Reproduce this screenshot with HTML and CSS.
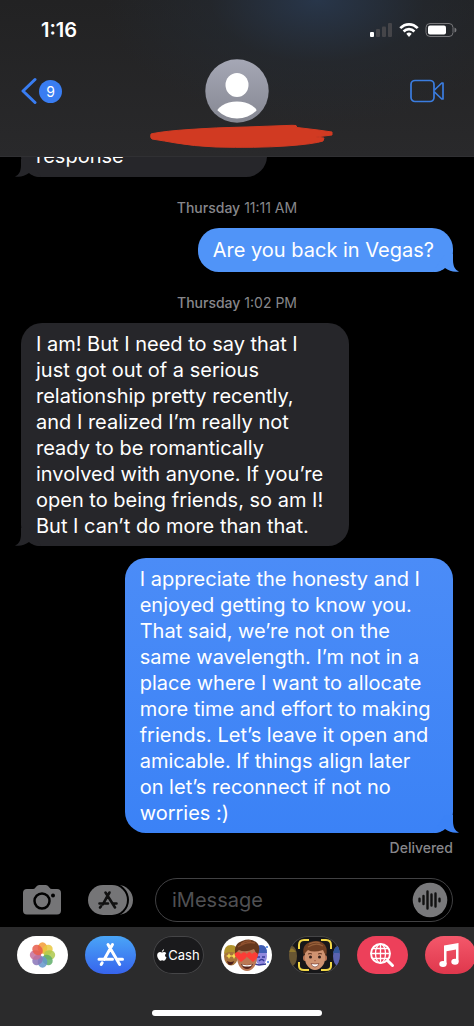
FILE: index.html
```html
<!DOCTYPE html>
<html lang="en">
<head>
    <meta charset="UTF-8">
    <meta name="viewport" content="width=device-width, initial-scale=1.0">
    <title>Messages</title>
    <link rel="stylesheet" href="styles.css">
</head>
<body>
    <!-- Header Section -->
    <header class="header">
        <div class="status-bar">
            <time class="clock">1:16</time>
            <div class="status-icons">
                <svg class="icon-signal" viewBox="0 0 24 16" width="24" height="16">
                    <rect x="1" y="10" width="4" height="5" rx="1" fill="#fff"/>
                    <rect x="7" y="7" width="4" height="8" rx="1" fill="#454549"/>
                    <rect x="13" y="4.500" width="4" height="10.500" rx="1" fill="#454549"/>
                    <rect x="19" y="1" width="4" height="14" rx="1" fill="#454549"/>
                </svg>
                <svg class="icon-wifi" viewBox="0 0 20 16" width="20" height="16" fill="none" stroke="#fff" stroke-width="2.700">
                    <path d="M1.300 6.100C6.300 1 13.700 1 18.700 6.100"/>
                    <path d="M4.600 9.500C7.700 6.400 12.300 6.400 15.400 9.500"/>
                    <path d="M7.300 11.700Q10 9.400 12.700 11.700L10 14.900Z" fill="#fff" stroke="none"/>
                </svg>
                <svg class="icon-battery" viewBox="0 0 32 16" width="32" height="16">
                    <rect x="1" y="1.500" width="27" height="13" rx="4" fill="none" stroke="#77777a"/>
                    <rect x="3" y="3.500" width="18" height="9" rx="2" fill="#fff"/>
                    <path d="M29.500 5.500q2 .5 2 2.500t-2 2.500z" fill="#77777a"/>
                </svg>
            </div>
        </div>

        <nav class="nav-bar">
            <button class="back-button" type="button" aria-label="Back, 9 unread">
                <svg viewBox="0 0 16 28" width="16" height="28" fill="none" stroke="#397df2" stroke-width="3" stroke-linecap="round" stroke-linejoin="round">
                    <path d="M14 2.500L2 14l12 11.500"/>
                </svg>
                <span class="badge">9</span>
            </button>
            <button class="avatar" type="button" aria-label="Contact">
                <svg viewBox="0 0 64 64" width="64" height="64">
                    <defs>
                        <linearGradient id="avatar-fill" x1="0" y1="0" x2="0" y2="1">
                            <stop offset="0" stop-color="#a5a7b5"/>
                            <stop offset="1" stop-color="#858792"/>
                        </linearGradient>
                        <clipPath id="avatar-clip"><circle cx="32" cy="32" r="27.500"/></clipPath>
                    </defs>
                    <circle cx="32" cy="32" r="31.700" fill="url(#avatar-fill)"/>
                    <ellipse cx="32" cy="26" rx="11.500" ry="12" fill="#fff"/>
                    <ellipse cx="32" cy="56" rx="21" ry="13.500" fill="#fff" clip-path="url(#avatar-clip)"/>
                </svg>
            </button>
            <button class="video-button" type="button" aria-label="FaceTime">
                <svg viewBox="0 0 36 24" width="36" height="24" fill="none" stroke="#3b7de0" stroke-width="1.700" stroke-linejoin="round">
                    <rect x="2" y="1.500" width="23" height="21" rx="4"/>
                    <path d="M25.500 11L32.800 4H34V20H32.800L25.500 13"/>
                </svg>
            </button>
        </nav>

        <svg class="marker" viewBox="0 0 192 24" width="192" height="24">
            <path d="M10 10Q9 14 11 15Q24 17 35 19Q52 22 75 23Q115 24 145 22Q173 20 182 17L183 14L175 13L191 11V8L177 6L156 3.500L155 1.500L151 1.300L105 3Q75 3.500 48 5.500Q25 7 12 9.500Z" fill="#d13a22" stroke="#d13a22" stroke-linejoin="round"/>
        </svg>
    </header>

    <!-- Conversation -->
    <main class="conversation">
        <div class="bubble received clipped">response
            <svg class="tail" viewBox="0 0 26 18" width="26" height="18"><path d="M6 0V6C6 12 4 16 0 17.500C5 18.500 10 17 14 14C17 16.500 20 18 26 18L14 0Z"/></svg>
        </div>

        <p class="timestamp"><strong>Thursday</strong> 11:11 AM</p>
        <div class="bubble sent light">Are you back in Vegas?
            <svg class="tail" viewBox="0 0 26 18" width="26" height="18"><path d="M20 0V6C20 12 22 16 26 17.500C21 18.500 16 17 12 14C9 16.500 6 18 0 18L12 0Z"/></svg>
        </div>

        <p class="timestamp"><strong>Thursday</strong> 1:02 PM</p>
        <div class="bubble received">I am! But I need to say that I just got out of a serious relationship pretty recently, and I realized I’m really not ready to be romantically involved with anyone. If you’re open to being friends, so am I! But I can’t do more than that.
            <svg class="tail" viewBox="0 0 26 18" width="26" height="18"><path d="M6 0V6C6 12 4 16 0 17.500C5 18.500 10 17 14 14C17 16.500 20 18 26 18L14 0Z"/></svg>
        </div>
        <div class="bubble sent">I appreciate the honesty and I enjoyed getting to know you. That said, we’re not on the same wavelength. I’m not in a place where I want to allocate more time and effort to making friends. Let’s leave it open and amicable. If things align later on let’s reconnect if not no worries :)
            <svg class="tail" viewBox="0 0 26 18" width="26" height="18"><path d="M20 0V6C20 12 22 16 26 17.500C21 18.500 16 17 12 14C9 16.500 6 18 0 18L12 0Z"/></svg>
        </div>
        <p class="delivered">Delivered</p>
    </main>

    <!-- Message Form -->
    <form class="composer">
        <button class="tool" type="button" aria-label="Camera">
            <svg viewBox="0 0 42 32" width="42" height="32">
                <path d="M6 5h6q1.500 0 2.500-1.500Q16 1 18 1h7q2 0 3.300 2.500Q29.300 5 31 5h5q4 0 4 4v17.500q0 4-4 4H6q-4 0-4-4V9q0-4 4-4z" fill="#757577"/>
                <circle cx="21" cy="17" r="7.500" fill="none" stroke="#000" stroke-width="2.500"/>
                <circle cx="32" cy="11.500" r="2" fill="#000"/>
            </svg>
        </button>
        <button class="tool" type="button" aria-label="Apps">
            <svg viewBox="0 0 48 32" width="48" height="32">
                <rect x="12" y="1" width="36" height="30" rx="15" fill="#757577"/>
                <rect x="1" y="-1" width="43" height="34" rx="17" fill="#000"/>
                <rect x="3" y="1" width="39" height="30" rx="15" fill="#757577"/>
                <g fill="none" stroke="#111" stroke-width="2.600" stroke-linecap="round">
                    <path d="M24.500 8.500l-6.700 11.800M16 22.300l-1 1.200M20.500 8.500l9.500 15M14.500 19.500H23M28.500 19.500h3"/>
                </g>
            </svg>
        </button>
        <div class="field">
            <input class="field-input" type="text" placeholder="iMessage" aria-label="iMessage">
            <button class="audio-button" type="button" aria-label="Record audio">
                <svg viewBox="0 0 36 36" width="36" height="36">
                    <circle cx="18" cy="18" r="17.300" fill="#79797b"/>
                    <path d="M7.500 16.800v2.400M11.500 14v8M15.500 9.500v17M19.500 12.500v11M23.500 11.500v13M27.500 16.800v2.400" fill="none" stroke="#111" stroke-width="2.400" stroke-linecap="round"/>
                </svg>
            </button>
        </div>
    </form>

    <!-- App Drawer -->
    <footer class="drawer">
        <div class="app-list">
            <button class="app photos" type="button" aria-label="Photos">
                <svg viewBox="0 0 51 38" width="51" height="38">
                    <g fill-opacity=".85">
                        <ellipse cx="25.500" cy="12" rx="4.800" ry="5.700" fill="#f39b35"/>
                        <ellipse cx="25.500" cy="12" rx="4.800" ry="5.700" fill="#e9c83f" transform="rotate(45 25.500 19)"/>
                        <ellipse cx="25.500" cy="12" rx="4.800" ry="5.700" fill="#aec94d" transform="rotate(90 25.500 19)"/>
                        <ellipse cx="25.500" cy="12" rx="4.800" ry="5.700" fill="#5fae69" transform="rotate(135 25.500 19)"/>
                        <ellipse cx="25.500" cy="12" rx="4.800" ry="5.700" fill="#6496cd" transform="rotate(180 25.500 19)"/>
                        <ellipse cx="25.500" cy="12" rx="4.800" ry="5.700" fill="#8975b8" transform="rotate(225 25.500 19)"/>
                        <ellipse cx="25.500" cy="12" rx="4.800" ry="5.700" fill="#c46f9b" transform="rotate(270 25.500 19)"/>
                        <ellipse cx="25.500" cy="12" rx="4.800" ry="5.700" fill="#e85d4b" transform="rotate(315 25.500 19)"/>
                    </g>
                    <circle cx="25.500" cy="19" r="1" fill="#fff"/>
                </svg>
            </button>
            <button class="app store" type="button" aria-label="App Store">
                <svg viewBox="0 0 51 38" width="51" height="38">
                    <path d="M27.500 8.500l-8.300 15M17.200 26.700l-1 1.700M23 8.500l11.700 20M14 23.300h13.500M33 23.300h4.500" fill="none" stroke="#fff" stroke-width="3" stroke-linecap="round"/>
                </svg>
            </button>
            <button class="app cash" type="button">
                <svg viewBox="0 0 10 12" width="10" height="12" fill="#fff">
                    <path d="M7 0Q7.200 2.200 4.900 3Q4.700 1 7 0zM5 3.600Q7.800 2.300 9.300 4.200Q7.500 5.500 8.300 7.300Q8.700 8.200 9.600 8.600Q8.200 12 6.800 11.700Q5 11 3.700 11.700Q2.300 12.200.8 9Q-.7 5.500 1.200 3.800Q2.700 2.500 5 3.600z"/>
                </svg>
                <span>Cash</span>
            </button>
            <button class="app stickers" type="button" aria-label="Memoji Stickers">
                <svg viewBox="0 0 51 38" width="51" height="38">
                    <!-- face with star eyes -->
                    <ellipse cx="10" cy="20" rx="7" ry="9.500" fill="#a6733c"/>
                    <path d="M3 18Q3 9 10 9Q17 9 17 18Q10 14 3 18z" fill="#b2942d"/>
                    <path d="M5 20l2-1 1-2 1 2 2 1-2 1-1 2-1-2zM10 20l2-1 1-2 1 2 2 1-2 1-1 2-1-2z" fill="#f7dc52"/>
                    <path d="M6 25q4 2 7 0q-1 4-4 4q-2 0-3-4z" fill="#4e201b"/>
                    <!-- face with blue hat -->
                    <ellipse cx="40" cy="20" rx="6" ry="9" fill="#9188dd"/>
                    <path d="M33 17Q34 9 40 9Q46 9 46 17z" fill="#3f5db4"/>
                    <path d="M36 21h3M41 21h3M38 25q3-3 5 0M34 28l4 1 7-1" stroke="#363a97" stroke-width="1.500" fill="none"/>
                    <circle cx="46" cy="11" r="1" fill="#4279dc"/>
                    <circle cx="47" cy="26" r="1" fill="#4279dc"/>
                    <!-- face with heart eyes -->
                    <ellipse cx="26" cy="21" rx="10" ry="14" fill="#b97855"/>
                    <path d="M15 21Q11 8 21 5Q31 1 37 8Q40 13 36 21Q35 16 33 13Q24 17 18 14Q15 16 15 21z" fill="#65381e"/>
                    <path d="M17 11Q26 5 34 7M20 8Q25 4 30 5" fill="none" stroke="#8d502e" stroke-width="1.500"/>
                    <path d="M20 26l-6-6q-1-4 3-4q2 0 3 2q2-3 5-1q2 2 0 5zM32 26l-6-5q-1-4 2-5q2 0 3 2q2-3 5-1q2 2 0 5z" fill="#fb3d36"/>
                    <path d="M20 28Q26 30 32 28Q30 33 26 33Q22 33 20 28z" fill="#552119"/>
                    <path d="M21 28.500Q26 30 31 28.500L30 30Q26 31 22 30z" fill="#fff"/>
                </svg>
            </button>
            <button class="app memoji" type="button" aria-label="Memoji">
                <svg viewBox="0 0 51 38" width="51" height="38">
                    <ellipse cx="3" cy="20" rx="5" ry="10" fill="#685632"/>
                    <path d="M0 16Q2 9 7 16z" fill="#91792e"/>
                    <ellipse cx="49" cy="20" rx="5" ry="10" fill="#5b63b1"/>
                    <path d="M44 17q2-8 7-6v6z" fill="#33569b"/>
                    <ellipse cx="16" cy="22" rx="2" ry="3" fill="#b97555"/>
                    <ellipse cx="36" cy="22" rx="2" ry="3" fill="#b97555"/>
                    <path d="M16 18Q16 10 26 10Q36 10 36 18V24Q35 30 30 33Q26 35 22 33Q17 30 16 24z" fill="#cf9371"/>
                    <path d="M15 20Q12 9 21 6Q31 3 36 9Q39 14 37 20L34 14Q24 17 19 14Q16 16 15 20z" fill="#6f3e22"/>
                    <path d="M19 11Q27 6 34 10M20 8Q26 5 31 7" fill="none" stroke="#97603a" stroke-width="1.200"/>
                    <path d="M19 18q2-1 4 0M29 18q2-1 4 0" stroke="#673a25" fill="none"/>
                    <circle cx="21.500" cy="21" r="1.500" fill="#36211c"/>
                    <circle cx="30.500" cy="21" r="1.500" fill="#36211c"/>
                    <path d="M25 24.500q1 .7 2 0" stroke="#a9664b" fill="none"/>
                    <path d="M22 27.500Q26 28.500 30 27.500Q29 31 26 31Q23 31 22 27.500z" fill="#fff" stroke="#7d4033" stroke-width=".7"/>
                    <path d="M10 13V9q0-5 5-5h5M32 4h5q5 0 5 5v4M10 26v4q0 4 5 4h5M32 34h5q5 0 5-4v-4" fill="none" stroke="#f2d847" stroke-width="2"/>
                </svg>
            </button>
            <button class="app images" type="button" aria-label="Images">
                <svg viewBox="0 0 51 38" width="51" height="38" fill="none" stroke="#fff">
                    <circle cx="23.500" cy="17.500" r="9.500" stroke-width="1.900"/>
                    <path d="M23.500 8v19M14 17.500h19M16 12.500h15M16 22.500h15" stroke-width="1.300"/>
                    <ellipse cx="23.500" cy="17.500" rx="5" ry="9.500" stroke-width="1.300"/>
                    <path d="M30.500 24.500l5 5" stroke-width="3" stroke-linecap="round"/>
                </svg>
            </button>
            <button class="app music" type="button" aria-label="Music">
                <svg viewBox="0 0 51 38" width="51" height="38" fill="#fff">
                    <path d="M19 9.500L33.500 7V25.500H31V13.500L21.500 15.300V28H19z"/>
                    <ellipse cx="18" cy="28" rx="3.700" ry="3"/>
                    <ellipse cx="30" cy="25.800" rx="3.700" ry="3"/>
                </svg>
            </button>
        </div>
        <div class="home-indicator"></div>
    </footer>
</body>
</html>
```
FILE: styles.css
```css
/* Global Styles */
* {
    box-sizing: border-box;
}

body {
    font-family: Inter, "Liberation Sans", sans-serif;
    margin: 0;
    height: 100vh;
    display: flex;
    flex-direction: column;
    overflow: hidden;
    background: #000;
    color: #fff;
}

button {
    font-family: inherit;
    margin: 0;
    padding: 0;
    border: none;
    background: none;
    color: inherit;
    cursor: pointer;
}

svg {
    display: block;
    flex-shrink: 0;
}

/* Header Section */
.header {
    flex-shrink: 0;
    padding-bottom: 8px;
    background:
        radial-gradient(ellipse 45% 80% at 67% 0, #28364a 0%, rgba(36, 43, 52, 0.5) 50%, rgba(36, 36, 38, 0) 100%),
        linear-gradient(#222223, #29292b);
    border-bottom: 1px solid #303033;
}

.status-bar {
    display: flex;
    justify-content: space-between;
    align-items: center;
    height: 59px;
    padding: 0 17px 0 41px;
}

.clock {
    font-size: 20px;
    font-weight: 600;
}

.status-icons {
    display: flex;
    gap: 6px;
}

.nav-bar {
    display: grid;
    grid-template-columns: 1fr auto 1fr;
    align-items: center;
    padding: 0 21px;
}

.back-button {
    display: flex;
    align-items: center;
    gap: 2px;
    justify-self: start;
}

.badge {
    width: 23px;
    height: 23px;
    border-radius: 50%;
    background: #397df2;
    font-size: 14px;
    line-height: 23px;
    text-align: center;
}

.avatar {
    border-radius: 50%;
}

.video-button {
    justify-self: end;
    padding-right: 8px;
}

.marker {
    margin: 1px auto 0;
}

/* Conversation */
.conversation {
    flex: 1;
    min-height: 0;
    display: flex;
    flex-direction: column;
    justify-content: flex-end;
    padding: 0 21px 20px;
    overflow: hidden;
}

.bubble {
    position: relative;
    flex-shrink: 0;
    max-width: 76%;
    min-height: 44px;
    padding: 8px 19px 7px 15px;
    border-radius: 21px;
    font-size: 20px;
    line-height: 26px;
}

.received {
    align-self: flex-start;
    background: #26262a;
}

.sent {
    align-self: flex-end;
    background: linear-gradient(#4b8cf7, #3b82f6);
}

.received + .sent {
    margin-top: 12px;
}

.light {
    padding-top: 9px;
    background: #5094f8;
}

.clipped {
    width: 57%;
    padding-top: 10px;
}

.tail {
    position: absolute;
    bottom: 0;
}

.received .tail {
    left: -6px;
    fill: #26262a;
}

.sent .tail {
    right: -6px;
    fill: #3b82f6;
}

.light .tail {
    fill: #5094f8;
}

.timestamp,
.delivered {
    flex-shrink: 0;
    margin: 0;
    color: #87878b;
    font-size: 14px;
    line-height: 20px;
}

.timestamp {
    padding: 21px 0 10px;
    text-align: center;
}

.timestamp strong,
.delivered {
    font-weight: 500;
}

.delivered {
    padding-top: 5px;
    text-align: right;
}

/* Message Form */
.composer {
    flex-shrink: 0;
    display: flex;
    align-items: center;
    gap: 22px;
    padding: 0 21px 5px;
}

.field {
    flex: 1;
    min-width: 0;
    display: flex;
    align-items: center;
    height: 44px;
    padding: 0 4px 0 16px;
    border: 1px solid #414143;
    border-radius: 22px;
}

.field-input {
    flex: 1;
    min-width: 0;
    padding: 0;
    border: none;
    outline: none;
    background: none;
    color: #fff;
    font-family: inherit;
    font-size: 20px;
}

.field-input::placeholder {
    color: #505053;
    opacity: 1;
}

/* App Drawer */
.drawer {
    flex-shrink: 0;
    padding: 9px 0 10px;
    background: #2b2b2c;
}

.app-list {
    display: flex;
    gap: 17px;
    padding-left: 17px;
    overflow: hidden;
}

.app {
    flex: 0 0 51px;
    display: flex;
    align-items: center;
    justify-content: center;
    height: 38px;
    border-radius: 19px;
    overflow: hidden;
}

.photos,
.stickers {
    background: #fff;
}

.store {
    background: linear-gradient(#4aa5f7, #3764ed);
}

.cash {
    gap: 1px;
    background: #1a1a1c;
    box-shadow: inset 0 0 0 1px #454547;
    font-size: 13px;
}

.memoji {
    background: #171719;
    box-shadow: inset 0 0 0 1px #454547;
}

.images {
    background: #ed405a;
}

.music {
    background: linear-gradient(#f4586b, #df374c);
}

.home-indicator {
    width: 36%;
    height: 6px;
    margin: 36px auto 0;
    border-radius: 3px;
    background: #fff;
}
```
